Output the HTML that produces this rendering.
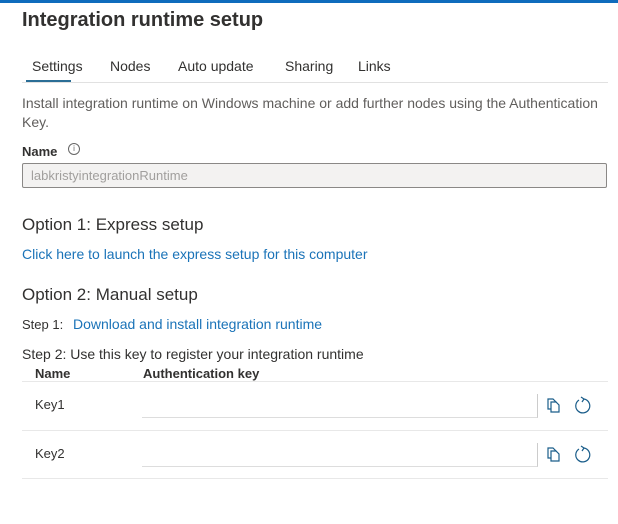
<!DOCTYPE html>
<html><head><style>
body{margin:0;width:618px;height:524px;background:#fff;font-family:"Liberation Sans",sans-serif;color:#323130;position:relative;overflow:hidden}
.a{position:absolute;white-space:nowrap}
.t{font-size:13px;color:#323130}
.g{font-size:14px;color:#605e5c}
.l{font-size:14px;color:#1a73b8}
.h{font-size:17px;color:#323130}
.ln{position:absolute;height:1px;background:#e8e8e8;left:22px;width:586px}
.box{position:absolute;left:142px;width:395px;height:23px;border-right:1px solid #ccc;border-bottom:1px solid #ddd}
</style></head><body>
<div style="position:absolute;left:0;top:0;width:618px;height:3px;background:#0f6cbd"></div>
<div class="a" style="left:22px;top:9px;font-size:20px;font-weight:bold;color:#323130">Integration runtime setup</div>
<div class="a t" style="left:32px;top:58px;font-size:14px">Settings</div>
<div class="a t" style="left:110px;top:58px;font-size:14px">Nodes</div>
<div class="a t" style="left:178px;top:58px;font-size:14px">Auto update</div>
<div class="a t" style="left:285px;top:58px;font-size:14px">Sharing</div>
<div class="a t" style="left:358px;top:58px;font-size:14px">Links</div>
<div class="ln" style="top:82px;background:#e1e1e1"></div>
<div style="position:absolute;left:26px;top:80px;width:45px;height:2px;background:#2b6e96"></div>
<div class="a g" style="left:22px;top:95px">Install integration runtime on Windows machine or add further nodes using the Authentication</div>
<div class="a g" style="left:22px;top:114px">Key.</div>
<div class="a t" style="left:22px;top:144px;font-weight:bold">Name</div>
<div class="a" style="left:68px;top:143px;width:10px;height:10px;border:1px solid #666;border-radius:50%;font-size:8px;text-align:center;line-height:10px;color:#666">i</div>
<div style="position:absolute;left:22px;top:163px;width:583px;height:23px;background:#f3f2f1;border:1px solid #8a8886;border-radius:2px"></div>
<div class="a" style="left:31px;top:168px;font-size:13px;color:#a19f9d">labkristyintegrationRuntime</div>
<div class="a h" style="left:22px;top:215px">Option 1: Express setup</div>
<div class="a l" style="left:22px;top:246px">Click here to launch the express setup for this computer</div>
<div class="a h" style="left:22px;top:285px">Option 2: Manual setup</div>
<div class="a t" style="left:22px;top:317px">Step 1:</div>
<div class="a l" style="left:73px;top:316px">Download and install integration runtime</div>
<div class="a t" style="left:22px;top:346px;font-size:14px">Step 2: Use this key to register your integration runtime</div>
<div class="a t" style="left:35px;top:366px;font-weight:bold">Name</div>
<div class="a t" style="left:143px;top:366px;font-weight:bold">Authentication key</div>
<div class="ln" style="top:381px"></div>
<div class="a t" style="left:35px;top:397px">Key1</div>
<div class="box" style="top:394px"></div>
<div class="ln" style="top:430px"></div>
<div class="a t" style="left:35px;top:446px">Key2</div>
<div class="box" style="top:443px"></div>
<div class="ln" style="top:478px"></div>
<svg style="position:absolute;left:546px;top:396px" width="50" height="18" viewBox="0 0 50 18"><g fill="none" stroke="#1a5d8a" stroke-width="1.2"><path d="M2 3h5l3 3v7H2z"/><path d="M5 6h5l3 3v7H5z" fill="#fff"/><path d="M33 4a7 7 0 1 0 5-1"/><path d="M35 1l3 2-2 3"/></g></svg>
<svg style="position:absolute;left:546px;top:445px" width="50" height="18" viewBox="0 0 50 18"><g fill="none" stroke="#1a5d8a" stroke-width="1.2"><path d="M2 3h5l3 3v7H2z"/><path d="M5 6h5l3 3v7H5z" fill="#fff"/><path d="M33 4a7 7 0 1 0 5-1"/><path d="M35 1l3 2-2 3"/></g></svg>
</body></html>
